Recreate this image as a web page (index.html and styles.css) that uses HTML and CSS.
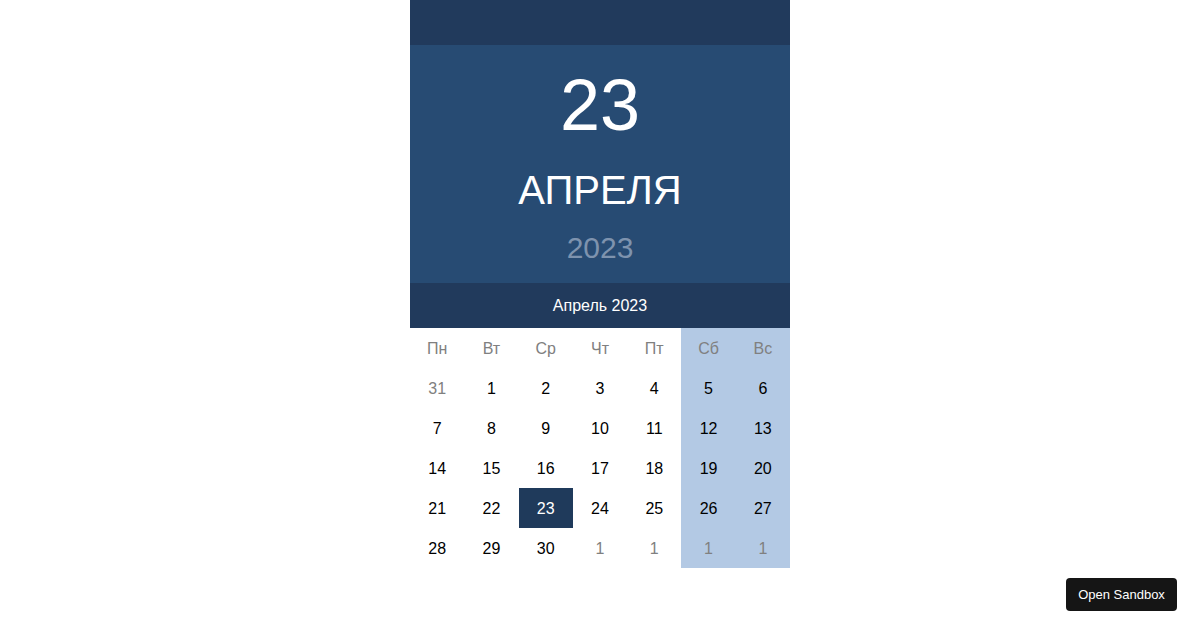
FILE: index.html
```html
<!DOCTYPE html>
<html lang="ru">
<head>
<meta charset="utf-8">
<link rel="stylesheet" href="styles.css">
</head>
<body>
<div class="calendar">
  <div class="topbar"></div>
  <div class="today">
    <div class="today-day">23</div>
    <div class="today-month">АПРЕЛЯ</div>
    <div class="today-year">2023</div>
  </div>
  <div class="month-title">Апрель 2023</div>
  <div class="grid">
    <div class="cell head">Пн</div><div class="cell head">Вт</div><div class="cell head">Ср</div><div class="cell head">Чт</div><div class="cell head">Пт</div><div class="cell head we">Сб</div><div class="cell head we">Вс</div>
    <div class="cell muted">31</div><div class="cell">1</div><div class="cell">2</div><div class="cell">3</div><div class="cell">4</div><div class="cell we">5</div><div class="cell we">6</div>
    <div class="cell">7</div><div class="cell">8</div><div class="cell">9</div><div class="cell">10</div><div class="cell">11</div><div class="cell we">12</div><div class="cell we">13</div>
    <div class="cell">14</div><div class="cell">15</div><div class="cell">16</div><div class="cell">17</div><div class="cell">18</div><div class="cell we">19</div><div class="cell we">20</div>
    <div class="cell">21</div><div class="cell">22</div><div class="cell selected">23</div><div class="cell">24</div><div class="cell">25</div><div class="cell we">26</div><div class="cell we">27</div>
    <div class="cell">28</div><div class="cell">29</div><div class="cell">30</div><div class="cell muted">1</div><div class="cell muted">1</div><div class="cell we muted">1</div><div class="cell we muted">1</div>
  </div>
</div>
<a class="sandbox-btn">Open Sandbox</a>
</body>
</html>
```

FILE: styles.css
```css
html, body {
  margin: 0;
  padding: 0;
  background: #ffffff;
  font-family: "Liberation Sans", Arial, sans-serif;
}

.calendar {
  width: 380px;
  margin: 0 auto;
}

.topbar {
  height: 45px;
  background: #213a5c;
}

.today {
  height: 238px;
  box-sizing: border-box;
  background: #274b73;
  color: #ffffff;
  display: flex;
  flex-direction: column;
  align-items: center;
  padding-top: 19px;
}

.today-day {
  font-size: 72px;
  line-height: 83px;
}

.today-month {
  margin-top: 20px;
  font-size: 40px;
  line-height: 46px;
}

.today-year {
  margin-top: 17px;
  font-size: 30px;
  line-height: 35px;
  color: #7e93ae;
}

.month-title {
  height: 45px;
  background: #213a5c;
  color: #ffffff;
  font-size: 16px;
  display: flex;
  align-items: center;
  justify-content: center;
}

.grid {
  display: grid;
  grid-template-columns: repeat(7, 1fr);
  grid-auto-rows: 40px;
}

.cell {
  display: flex;
  align-items: center;
  justify-content: center;
  padding-top: 2px;
  box-sizing: border-box;
  font-size: 16px;
  color: #000000;
}

.cell.head {
  color: #808080;
}

.cell.we {
  background: #b3c9e4;
}

.cell.muted {
  color: #808080;
}

.cell.selected {
  background: #1f3a5b;
  color: #ffffff;
}

.sandbox-btn {
  position: fixed;
  right: 23px;
  bottom: 19px;
  width: 111px;
  height: 33px;
  box-sizing: border-box;
  background: #151515;
  color: #ffffff;
  border-radius: 4px;
  font-size: 13px;
  display: flex;
  align-items: center;
  justify-content: center;
}
```
